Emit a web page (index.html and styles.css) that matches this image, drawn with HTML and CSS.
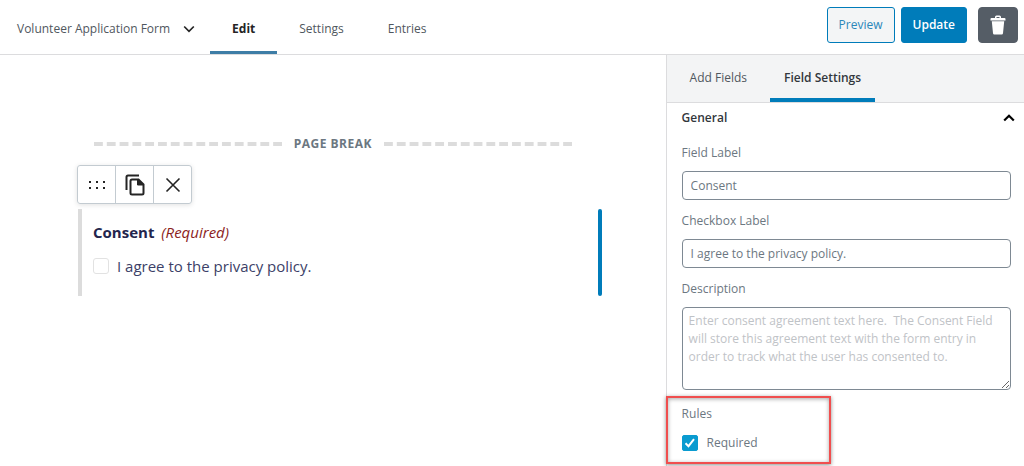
FILE: index.html
```
<!DOCTYPE html>
<html lang="en">
<head>
  <meta charset="UTF-8">
  <meta name="viewport" content="width=device-width, initial-scale=1.0">
  <title>Volunteer Application Form</title>
  <link rel="stylesheet" href="styles.css">
</head>
<body>
<header class="topbar">
  <button type="button" class="form-switcher">
    Volunteer Application Form
    <svg width="12" height="8" viewBox="0 0 12 8"><path d="M1.200 1.500 6 6.300l4.800-4.800" fill="none" stroke="#242424" stroke-width="1.700"/></svg>
  </button>
  <nav class="main-nav">
    <a href="#" class="active">Edit</a>
    <a href="#">Settings</a>
    <a href="#">Entries</a>
  </nav>
  <div class="actions">
    <button type="button" class="btn btn-preview">Preview</button>
    <button type="button" class="btn btn-update">Update</button>
    <button type="button" class="btn btn-trash" aria-label="Move to trash">
      <svg width="16" height="20" viewBox="0 0 16 20" fill="#fff">
        <path d="M5 3V2q0-1.500 1.500-1.500h3Q11 .5 11 2v1h3.500q1 0 1 1v1.500H.5V4q0-1 1-1zM6.500 3h3V2h-3z" fill-rule="evenodd"/>
        <path d="M1.800 6.300h12.400l-1.200 12q-.1 1.200-1.300 1.200H4.300Q3.100 19.500 3 18.300z"/>
      </svg>
    </button>
  </div>
</header>

<div class="layout">
  <main class="editor">
    <div class="page-break">
      <span class="dashes"></span>
      <span class="page-break-label">Page Break</span>
      <span class="dashes"></span>
    </div>

    <div class="field-toolbar">
      <button type="button" aria-label="Move">
        <svg width="18" height="10" viewBox="0 0 18 10" fill="#242424">
          <path d="M1 1h2v2H1zM8 1h2v2H8zM15 1h2v2h-2zM1 7h2v2H1zM8 7h2v2H8zM15 7h2v2h-2z"/>
        </svg>
      </button>
      <button type="button" aria-label="Duplicate">
        <svg width="20" height="22" viewBox="0 0 20 22" fill="none" stroke="#242424" stroke-width="2">
          <path d="M1.500 16V3Q1.500 1.500 3 1.500h11"/>
          <path d="M7 5.500h6.500L18.500 10.500V19q0 1.500-1.500 1.500H7q-1.500 0-1.500-1.500V7Q5.500 5.500 7 5.500z"/>
          <path d="M12.500 5.500V11h6z" fill="#242424" stroke-width="1"/>
        </svg>
      </button>
      <button type="button" aria-label="Delete">
        <svg width="16" height="16" viewBox="0 0 16 16"><path d="M1.500 1.500l13 13M14.500 1.500l-13 13" fill="none" stroke="#242424" stroke-width="1.600"/></svg>
      </button>
    </div>

    <div class="field">
      <div class="field-title">Consent <span class="required">(Required)</span></div>
      <div class="field-choice">
        <input type="checkbox" id="consent">
        <label for="consent">I agree to the privacy policy.</label>
      </div>
    </div>
  </main>

  <aside class="sidebar">
    <nav class="side-tabs">
      <a href="#">Add Fields</a>
      <a href="#" class="active">Field Settings</a>
    </nav>

    <form class="settings">
      <button type="button" class="section-toggle">
        General
        <svg width="12" height="8" viewBox="0 0 12 8"><path d="M1.200 6.500 6 1.800l4.800 4.700" fill="none" stroke="#000" stroke-width="2.200"/></svg>
      </button>

      <div class="setting">
        <label for="fieldLabel">Field Label</label>
        <input type="text" id="fieldLabel" value="Consent">
      </div>
      <div class="setting">
        <label for="checkboxLabel">Checkbox Label</label>
        <input type="text" id="checkboxLabel" value="I agree to the privacy policy.">
      </div>
      <div class="setting">
        <label for="description">Description</label>
        <textarea id="description" placeholder="Enter consent agreement text here.&nbsp; The Consent Field will store this agreement text with the form entry in order to track what the user has consented to."></textarea>
      </div>

      <div class="rules" role="group" aria-labelledby="rulesTitle">
        <div class="rules-title" id="rulesTitle">Rules</div>
        <div class="rule">
          <input type="checkbox" id="required" checked>
          <label for="required">Required</label>
        </div>
      </div>
    </form>
  </aside>
</div>
</body>
</html>
```
FILE: styles.css
```
* {
  box-sizing: border-box;
}

body {
  margin: 0;
  min-height: 100vh;
  display: flex;
  flex-direction: column;
  font-family: "Segoe UI", "Open Sans", sans-serif;
  font-size: 12px;
  line-height: 20px;
  color: #50575e;
  background: #fff;
}

button, input, textarea {
  font: inherit;
  color: inherit;
}

button {
  cursor: pointer;
}

a {
  color: inherit;
  text-decoration: none;
}

svg {
  display: block;
}

/* Top bar */
.topbar {
  display: flex;
  height: 55px;
  border-bottom: 1px solid #dcdcde;
}

.form-switcher {
  display: flex;
  align-items: center;
  gap: 13px;
  padding: 4px 15px 0 17px;
  border: none;
  background: none;
}

.main-nav {
  display: flex;
}

.main-nav a {
  padding: 19px 22px 0;
  height: 54px;
  border-bottom: 3px solid transparent;
}

.main-nav a.active {
  font-weight: 700;
  color: #242424;
  border-bottom-color: #3e7da6;
}

.actions {
  display: flex;
  gap: 6px;
  margin-left: auto;
  padding: 7px 6px 0 0;
}

.btn {
  height: 36px;
  padding: 0 11px;
  border: 1px solid #007cba;
  border-radius: 3px;
}

.btn-preview {
  background: #f3f5f6;
  color: #2b87b9;
}

.btn-update {
  background: #007cba;
  color: #fff;
  font-weight: 600;
}

.btn-trash {
  margin-left: 5px;
  background: #555d66;
  border-color: #555d66;
  border-radius: 4px;
}

.layout {
  display: flex;
  flex: 1;
}

/* Form editor */
.editor {
  flex: 1;
  padding: 79px 64px 0 77px;
}

.page-break {
  display: flex;
  align-items: center;
  padding: 0 26px 0 17px;
}

.dashes {
  flex: 1;
  height: 4px;
  background: linear-gradient(to right, #dcdcdc 70%, transparent 70%) 0 0 / 13px 4px round;
}

.page-break-label {
  margin: 0 12px 0 8px;
  font-weight: 700;
  text-transform: uppercase;
  letter-spacing: 0.5px;
  color: #6c7781;
}

.field-toolbar {
  display: flex;
  width: max-content;
  margin-top: 11px;
  border: 1px solid #c3cbd1;
  border-radius: 3px;
  box-shadow: 0 1px 5px rgba(0, 0, 0, 0.12);
}

.field-toolbar button {
  display: flex;
  align-items: center;
  justify-content: center;
  width: 37px;
  height: 37px;
  padding: 0;
  border: none;
  background: none;
}

.field-toolbar button + button {
  width: 38px;
  border-left: 1px solid #c3cbd1;
}

.field {
  position: relative;
  margin: 5px 0 0 1px;
  padding: 12px 15px 19px 11px;
  border-left: 4px solid #dcdcdc;
  font-size: 15px;
  line-height: 22px;
  color: #3c3f68;
}

/* selected field marker */
.field::after {
  content: "";
  position: absolute;
  top: 0;
  right: 0;
  bottom: 0;
  width: 4px;
  border-radius: 2px;
  background: #007cba;
}

.field-title {
  font-weight: 700;
  color: #23254d;
}

.required {
  margin-left: 3px;
  font-weight: 400;
  font-style: italic;
  color: #8b1d1d;
}

.field-choice {
  display: flex;
  align-items: center;
  gap: 8px;
  margin-top: 12px;
}

input[type="checkbox"] {
  appearance: none;
  width: 16px;
  height: 16px;
  margin: 0;
  border: 1px solid #e2e2e2;
  border-radius: 3px;
}

/* Sidebar */
.sidebar {
  flex: 0 0 35%;
  border-left: 1px solid #dcdcde;
}

.side-tabs {
  display: flex;
  height: 48px;
  background: #f3f4f5;
  border-bottom: 1px solid #dcdcde;
}

.side-tabs a {
  height: 47px;
  padding: 13px 14px 0;
  border-bottom: 4px solid transparent;
}

.side-tabs a:first-child {
  padding: 13px 23px 0;
}

.side-tabs a.active {
  font-weight: 600;
  color: #32373c;
  border-bottom-color: #007cba;
}

.settings {
  padding: 0 13px 0 15px;
  color: #6c7781;
}

.section-toggle {
  display: flex;
  align-items: center;
  justify-content: space-between;
  width: calc(100% + 4px);
  height: 30px;
  margin-bottom: 10px;
  padding: 0;
  border: none;
  background: none;
  font-weight: 600;
  color: #32373c;
}

.setting label {
  display: block;
  margin-bottom: 8px;
}

.setting input,
.setting textarea {
  display: block;
  width: 100%;
  height: 29px;
  margin-bottom: 11px;
  padding: 0 8px;
  border: 1px solid #7e8993;
  border-radius: 4px;
  background: #fff;
}

.setting textarea {
  height: 83px;
  margin-bottom: 6px;
  padding: 4px 6px;
  line-height: 18px;
  resize: vertical;
}

.setting textarea::placeholder {
  color: #bfc3c7;
}

.rules {
  width: 165px;
  height: 68px;
  margin-left: -16px;
  padding: 6px 14px;
  border: 2px solid #f04e4e;
  box-shadow: 0 1px 4px rgba(0, 0, 0, 0.45), inset 0 1px 4px rgba(0, 0, 0, 0.35);
}

.rule {
  display: flex;
  align-items: center;
  gap: 9px;
  margin-top: 9px;
}

.rule input:checked {
  border-color: #0a9bd0;
  border-radius: 2px;
  background: #0a9bd0 url("data:image/svg+xml,%3Csvg xmlns='http://www.w3.org/2000/svg' viewBox='0 0 16 16'%3E%3Cpath d='M3.500 8.200l3 3 5.500-7' fill='none' stroke='white' stroke-width='2'/%3E%3C/svg%3E") center / 16px;
}
```
